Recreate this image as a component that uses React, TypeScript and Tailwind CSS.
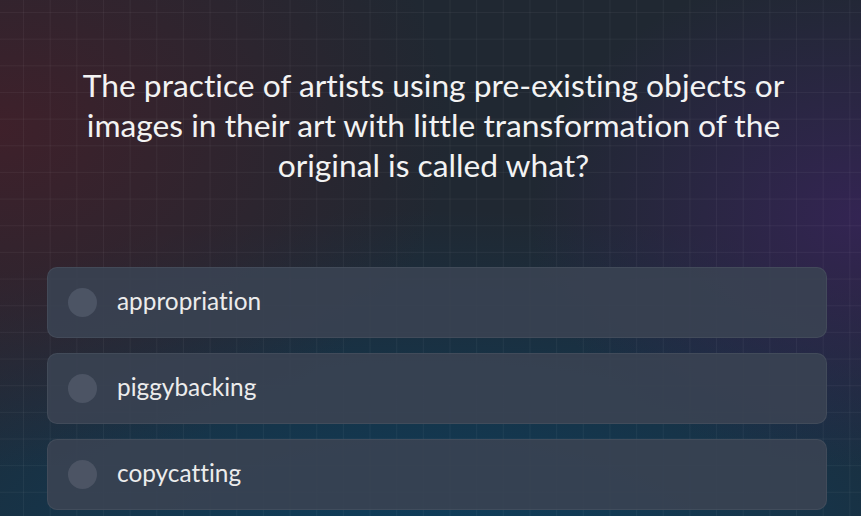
const options = ['appropriation', 'piggybacking', 'copycatting']

function Option({ label }: { label: string }) {
  return (
    <div className="flex h-[71px] items-center rounded-[10px] border border-white/[0.06] bg-[#3a4352]/90 pl-[20px]">
      <span className="h-[29px] w-[29px] shrink-0 rounded-full bg-[#4c5464]" />
      <span className="ml-[20px] pb-[2px] text-[24.4px] text-[#ececec]">{label}</span>
    </div>
  )
}

export default function App() {
  return (
    <div
      className="relative h-[516px] w-[861px] overflow-hidden bg-[#202832] bg-[radial-gradient(ellipse_75%_95%_at_0%_25%,rgba(64,32,42,0.95),transparent_70%),radial-gradient(ellipse_55%_70%_at_100%_42%,rgba(52,36,84,0.95),transparent_70%),radial-gradient(ellipse_120%_95%_at_50%_112%,rgba(12,64,96,1),transparent_75%)] [font-variant-ligatures:none]"
      style={{ fontFamily: 'Lato, "Noto Sans", sans-serif' }}
    >
      <div className="absolute inset-0 bg-[linear-gradient(to_right,rgba(255,255,255,0.045)_1px,transparent_1px),linear-gradient(to_bottom,rgba(255,255,255,0.045)_1px,transparent_1px)] bg-[size:26.67px_26.67px] bg-[position:23px_12px]" />
      <div className="relative flex flex-col pl-[47px] pt-[65px]">
        <h1 className="w-[780px] pr-[7px] text-center text-[31.75px] leading-[40px] text-[#f3f3f3]">
          The practice of artists using pre-existing objects or images in their art with little transformation of the original is called what?
        </h1>
        <div className="mt-[82px] flex w-[780px] flex-col gap-[15px]">
          {options.map((o) => (
            <Option key={o} label={o} />
          ))}
        </div>
      </div>
    </div>
  )
}
